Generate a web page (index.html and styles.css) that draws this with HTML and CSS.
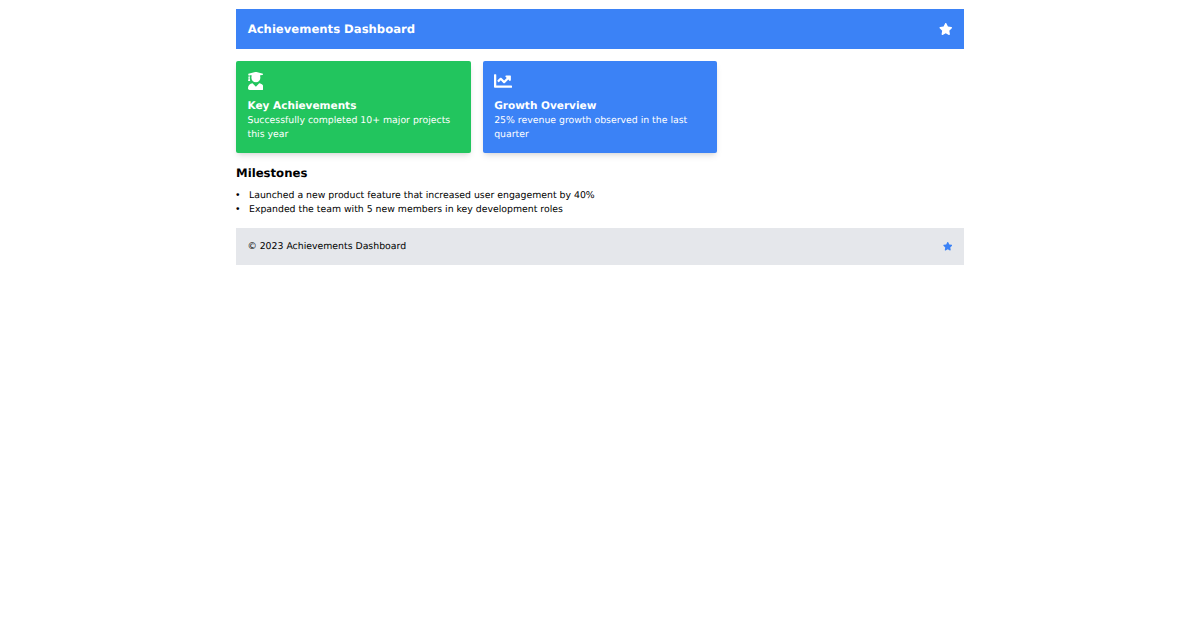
FILE: index.html
```html
<!DOCTYPE html>
<html lang="en">
<head>
<meta charset="utf-8">
<title>Achievements Dashboard</title>
<link rel="stylesheet" href="styles.css">
</head>
<body>
<div class="page">
  <header class="topbar">
    <h1 class="topbar-title">Achievements Dashboard</h1>
    <svg class="icon-star-lg" viewBox="0 0 576 512"><path d="M259.3 17.8L194 150.2 47.9 171.5c-26.2 3.8-36.7 36.1-17.7 54.6l105.7 103-25 145.5c-4.5 26.3 23.2 46 46.4 33.7L288 439.6l130.7 68.7c23.2 12.2 50.9-7.4 46.4-33.7l-25-145.5 105.7-103c19-18.5 8.5-50.8-17.7-54.6L382 150.2 316.7 17.8c-11.7-23.6-45.6-23.9-57.4 0z"/></svg>
  </header>
  <section class="cards">
    <article class="card card-green">
      <svg class="card-icon" viewBox="0 0 448 512"><path d="M319.4 320.6L224 416l-95.4-95.4C57.1 323.7 0 382.2 0 454.4v9.6c0 26.5 21.5 48 48 48h352c26.5 0 48-21.5 48-48v-9.6c0-72.2-57.1-130.7-128.6-133.8zM13.6 79.8l6.4 1.5v58.4c-7 4.2-12 11.5-12 20.3 0 8.4 4.6 15.4 11.1 19.7L3.5 242c-1.7 6.9 2.1 14 7.6 14h41.8c5.5 0 9.3-7.1 7.6-14l-15.6-62.3C51.4 175.4 56 168.4 56 160c0-8.8-5-16.1-12-20.3V87.1l66 15.9c-8.6 17.2-14 36.4-14 57 0 70.7 57.3 128 128 128s128-57.3 128-128c0-20.6-5.3-39.8-14-57l96.3-23.2c18.2-4.4 18.2-27.1 0-31.5l-190.4-46c-13-3.1-26.7-3.1-39.7 0L13.6 48.2c-18.1 4.4-18.1 27.2 0 31.6z"/></svg>
      <h2 class="card-title">Key Achievements</h2>
      <p class="card-text">Successfully completed 10+ major projects this year</p>
    </article>
    <article class="card card-blue">
      <svg class="card-icon" viewBox="0 0 512 512"><path d="M496 384H64V80c0-8.84-7.16-16-16-16H16C7.16 64 0 71.16 0 80v336c0 17.67 14.33 32 32 32h464c8.84 0 16-7.16 16-16v-32c0-8.84-7.16-16-16-16zM464 96H345.94c-21.38 0-32.09 25.85-16.97 40.97l32.4 32.4L288 242.75l-73.37-73.37c-12.5-12.5-32.76-12.5-45.25 0l-68.69 68.69c-6.25 6.25-6.25 16.38 0 22.63l22.62 22.62c6.25 6.25 16.38 6.25 22.63 0L192 237.25l73.37 73.37c12.5 12.5 32.76 12.5 45.25 0l96-96 32.4 32.4c15.12 15.12 40.97 4.41 40.97-16.97V112c0-8.84-7.16-16-16-16z"/></svg>
      <h2 class="card-title">Growth Overview</h2>
      <p class="card-text">25% revenue growth observed in the last quarter</p>
    </article>
  </section>
  <section class="milestones">
    <h3 class="milestones-title">Milestones</h3>
    <ul class="milestones-list">
      <li class="milestones-item">Launched a new product feature that increased user engagement by 40%</li>
      <li class="milestones-item">Expanded the team with 5 new members in key development roles</li>
    </ul>
  </section>
  <footer class="bottombar">
    <span class="bottombar-text">© 2023 Achievements Dashboard</span>
    <svg class="icon-star-sm" viewBox="0 0 576 512"><path d="M259.3 17.8L194 150.2 47.9 171.5c-26.2 3.8-36.7 36.1-17.7 54.6l105.7 103-25 145.5c-4.5 26.3 23.2 46 46.4 33.7L288 439.6l130.7 68.7c23.2 12.2 50.9-7.4 46.4-33.7l-25-145.5 105.7-103c19-18.5 8.5-50.8-17.7-54.6L382 150.2 316.7 17.8c-11.7-23.6-45.6-23.9-57.4 0z"/></svg>
  </footer>
</div>
</body>
</html>
```
FILE: styles.css
```css
* { box-sizing: border-box; }
html, body { margin: 0; padding: 0; background: #fff; }
body { font-family: "DejaVu Sans", sans-serif; color: #000; text-rendering: geometricPrecision; }
.page { width: 728px; margin: 0 auto; padding-top: 9.3px; }
.topbar { height: 39.7px; padding: 0 12px 0 11.7px; background: #3b82f6; color: #fff; display: flex; align-items: center; justify-content: space-between; }
.topbar-title { margin: 0; font-size: 11.65px; font-weight: 700; }
.icon-star-lg { width: 13.5px; height: 12px; fill: #fff; }
.cards { display: grid; grid-template-columns: repeat(3, 1fr); gap: 12px; margin-top: 12px; }
.card { padding: 11px 11.5px 11px; border-radius: 2px; color: #fff; box-shadow: 0 4px 6px -1px rgba(0,0,0,.1), 0 2px 4px -2px rgba(0,0,0,.1); }
.card-green { background: #22c55e; }
.card-blue { background: #3b82f6; }
.card-icon { display: block; height: 18px; width: auto; fill: #fff; margin-bottom: 8px; }
.card-title { margin: 0; font-size: 10.5px; line-height: 16px; font-weight: 700; }
.card-text { margin: 0; font-size: 9.33px; line-height: 14px; }
.milestones { margin-top: 12px; }
.milestones-title { margin: 0 0 8px; font-size: 11.7px; line-height: 16px; font-weight: 700; }
.milestones-list { margin: 0; padding: 0; font-size: 9.33px; line-height: 14px; list-style: none; }
.milestones-item { display: flex; }
.milestones-item::before { content: "•"; flex: 0 0 13px; margin-left: -1px; margin-right: 1px; }
.bottombar { margin-top: 11px; height: 37px; padding: 0 12px 0 11.4px; background: #e5e7eb; display: flex; align-items: center; justify-content: space-between; font-size: 9.33px; }
.icon-star-sm { width: 9.5px; height: 8.5px; fill: #3b82f6; }
```
